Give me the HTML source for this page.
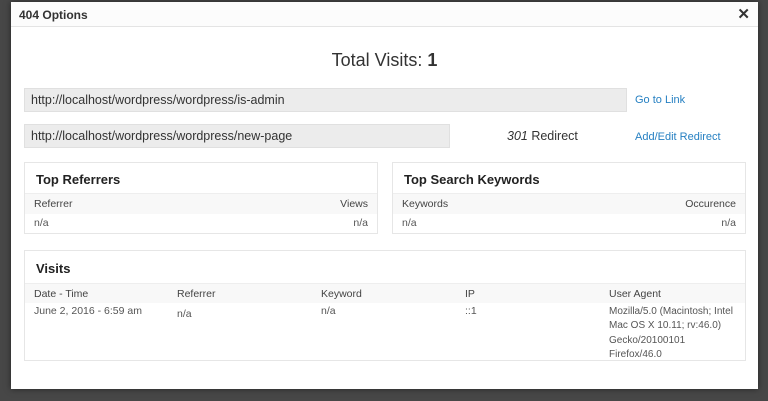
<!DOCTYPE html>
<html><head><meta charset="utf-8"><style>
*{box-sizing:border-box;margin:0;padding:0}
body{width:768px;height:401px;background:#474747;font-family:"Liberation Sans",sans-serif;color:#444;position:relative;overflow:hidden;font-size:10.5px}
.modal{position:absolute;left:11px;top:2px;width:747px;height:387px;background:#fff;box-shadow:0 0 6px rgba(0,0,0,.5)}
.hdr{height:25px;border-bottom:1px solid #e4e4e4;background:#fcfcfc;position:relative}
.hdr b{position:absolute;left:8px;top:6px;font-size:12px;color:#333}
.x{position:absolute;right:8px;top:3px;font-size:15px;font-weight:bold;color:#333}
.a{position:absolute}
.title{left:0;width:747px;text-align:center;top:48px;font-size:18px;color:#333}
.inp{background:#ececec;border:1px solid #e0e0e0;font-size:12.5px;color:#333;padding:4px 6px;height:24px}
.lnk{color:#2680c2;font-size:11px}
.box{border:1px solid #e6e6e6;background:#fff}
.bh{height:31px;border-bottom:1px solid #eee;font-weight:bold;font-size:13px;color:#222;padding:9px 11px}
.row{height:20px;background:#f8f8f8;padding:4px 9px;display:flex;justify-content:space-between;color:#444}
.row2{height:20px;padding:3px 9px;display:flex;justify-content:space-between;color:#555}
.vb .c{position:absolute;color:#444}
</style></head><body>
<div class="modal">
<div class="hdr"><b>404 Options</b><span class="x">✕</span></div>
<div class="a title">Total Visits: <b>1</b></div>
<div class="a inp" style="left:13px;top:86px;width:603px">http://localhost/wordpress/wordpress/is-admin</div>
<div class="a lnk" style="left:624px;top:92px">Go to Link</div>
<div class="a inp" style="left:13px;top:122px;width:426px">http://localhost/wordpress/wordpress/new-page</div>
<div class="a" style="left:496px;top:127px;font-size:12.5px;color:#333"><i>301</i> Redirect</div>
<div class="a lnk" style="left:624px;top:129px">Add/Edit Redirect</div>

<div class="a box" style="left:13px;top:160px;width:354px;height:72px">
<div class="bh">Top Referrers</div>
<div class="row"><span>Referrer</span><span>Views</span></div>
<div class="row2"><span>n/a</span><span>n/a</span></div>
</div>
<div class="a box" style="left:381px;top:160px;width:354px;height:72px">
<div class="bh">Top Search Keywords</div>
<div class="row"><span>Keywords</span><span>Occurence</span></div>
<div class="row2"><span>n/a</span><span>n/a</span></div>
</div>

<div class="a box vb" style="left:13px;top:248px;width:722px;height:111px">
<div class="bh" style="height:33px;padding-top:10px">Visits</div>
<div style="height:19px;background:#f8f8f8"></div>
<div class="c" style="left:9px;top:37px">Date - Time</div>
<div class="c" style="left:152px;top:37px">Referrer</div>
<div class="c" style="left:296px;top:37px">Keyword</div>
<div class="c" style="left:440px;top:37px">IP</div>
<div class="c" style="left:584px;top:37px">User Agent</div>
<div class="c" style="left:9px;top:54px;color:#555">June 2, 2016 - 6:59 am</div>
<div class="c" style="left:152px;top:57px;color:#555">n/a</div>
<div class="c" style="left:296px;top:54px;color:#555">n/a</div>
<div class="c" style="left:440px;top:54px;color:#555">::1</div>
<div class="c" style="left:584px;top:54px;color:#555;line-height:14.3px;font-size:10px">Mozilla/5.0 (Macintosh; Intel<br>Mac OS X 10.11; rv:46.0)<br>Gecko/20100101<br>Firefox/46.0</div>
</div>
</div>
</body></html>
